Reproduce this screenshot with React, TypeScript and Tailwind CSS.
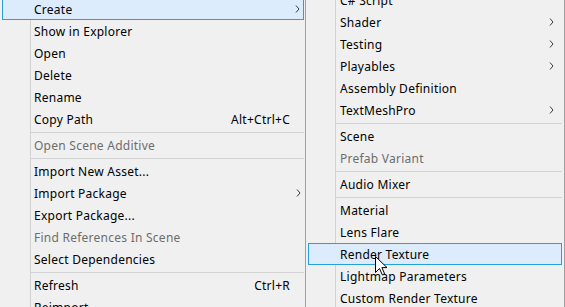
import React from "react";

type Item =
  | { kind: "item"; label: string; shortcut?: string; sub?: boolean; disabled?: boolean; active?: boolean }
  | { kind: "sep" };

const leftItems: Item[] = [
  { kind: "item", label: "Create", sub: true, active: true },
  { kind: "item", label: "Show in Explorer" },
  { kind: "item", label: "Open" },
  { kind: "item", label: "Delete" },
  { kind: "item", label: "Rename" },
  { kind: "item", label: "Copy Path", shortcut: "Alt+Ctrl+C" },
  { kind: "sep" },
  { kind: "item", label: "Open Scene Additive", disabled: true },
  { kind: "sep" },
  { kind: "item", label: "Import New Asset..." },
  { kind: "item", label: "Import Package", sub: true },
  { kind: "item", label: "Export Package..." },
  { kind: "item", label: "Find References In Scene", disabled: true },
  { kind: "item", label: "Select Dependencies" },
  { kind: "sep" },
  { kind: "item", label: "Refresh", shortcut: "Ctrl+R" },
  { kind: "item", label: "Reimport" },
];

const rightItems: Item[] = [
  { kind: "item", label: "C# Script" },
  { kind: "item", label: "Shader", sub: true },
  { kind: "item", label: "Testing", sub: true },
  { kind: "item", label: "Playables", sub: true },
  { kind: "item", label: "Assembly Definition" },
  { kind: "item", label: "TextMeshPro", sub: true },
  { kind: "sep" },
  { kind: "item", label: "Scene" },
  { kind: "item", label: "Prefab Variant", disabled: true },
  { kind: "sep" },
  { kind: "item", label: "Audio Mixer" },
  { kind: "sep" },
  { kind: "item", label: "Material" },
  { kind: "item", label: "Lens Flare" },
  { kind: "item", label: "Render Texture", active: true },
  { kind: "item", label: "Lightmap Parameters" },
  { kind: "item", label: "Custom Render Texture" },
];

function Chevron() {
  return (
    <svg width="5" height="8" viewBox="0 0 5 8" className="block">
      <path d="M1 0.5 L4 4 L1 7.5" fill="none" stroke="#3a3a3a" strokeWidth="1" />
    </svg>
  );
}

function Menu({
  items,
  side,
}: {
  items: Item[];
  side: "left" | "right";
}) {
  const isLeft = side === "left";
  return (
    <div
      className={
        isLeft
          ? "relative w-[306px] shrink-0 border-r border-[#a0a0a0] pl-[2px] pr-[1px] -mt-[2px]"
          : "relative w-[259px] shrink-0 border-r border-[#a0a0a0] px-[2px] -mt-[11px]"
      }
    >
      <div
        className={
          isLeft
            ? "absolute left-[30px] top-0 bottom-0 w-px bg-[#d3d3d3]"
            : "absolute left-[29px] top-0 bottom-0 w-px bg-[#d3d3d3]"
        }
      />
      {items.map((it, i) => {
        if (it.kind === "sep") {
          return (
            <div key={i} className="relative h-[4px] pt-[2px]">
              <div className={isLeft ? "ml-[28px] h-px bg-[#d3d3d3]" : "ml-[27px] h-px bg-[#d3d3d3]"} />
            </div>
          );
        }
        return (
          <div
            key={i}
            className={
              "relative flex h-[22px] items-center whitespace-nowrap pt-[2px] tracking-[0.25px] " +
              (it.active
                ? "border border-[#26a0da] bg-[#dcecfc] pl-[31px]"
                : "pl-[32px]") +
              (it.disabled ? " text-[#6d6d6d]" : " text-black")
            }
          >
            <span className="flex-1">{it.label}</span>
            {it.shortcut && <span>{it.shortcut}</span>}
            <span
              className={
                isLeft
                  ? "flex w-[14px] shrink-0 pl-[6px] -mt-[2px]"
                  : "flex w-[14px] shrink-0 pl-[1px] -mt-[2px]"
              }
            >
              {it.sub && <Chevron />}
            </span>
          </div>
        );
      })}
    </div>
  );
}

function Cursor() {
  return (
    <svg
      width="13"
      height="20"
      viewBox="0 0 13 20"
      className="pointer-events-none absolute left-[375px] top-[256px]"
    >
      <path
        d="M0.5 0.5 L0.5 16.5 L4.5 12.5 L7.3 18.8 L9.6 17.8 L6.9 11.6 L12 11.6 Z"
        fill="#ffffff"
        stroke="#000000"
        strokeWidth="1"
        strokeLinejoin="miter"
      />
    </svg>
  );
}

export default function App() {
  return (
    <div
      className="relative flex h-[307px] w-[565px] overflow-hidden bg-[#f0f0f0] text-[12px] leading-none"
      style={{ fontFamily: '"Noto Sans", "Liberation Sans", sans-serif' }}
    >
      <Menu items={leftItems} side="left" />
      <Menu items={rightItems} side="right" />
      <Cursor />
    </div>
  );
}
